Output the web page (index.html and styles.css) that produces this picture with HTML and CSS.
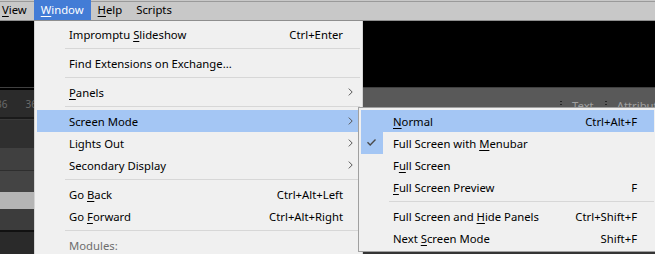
FILE: index.html
```html
<!DOCTYPE html>
<html>
<head>
<meta charset="utf-8">
<link rel="stylesheet" href="styles.css">
</head>
<body>
<div class="screen">
  <div class="menubar">
    <span class="mb-item first"><u>V</u>iew</span>
    <span class="mb-item active"><u>W</u>indow</span>
    <span class="mb-item"><u>H</u>elp</span>
    <span class="mb-item">Scripts</span>
  </div>
  <div class="app">
    <div class="left-col">
      <div class="viewer"></div>
      <div class="ruler"><span class="r1">36</span><span class="r2">36</span></div>
      <div class="band b1"></div>
      <div class="band b2"></div>
      <div class="band b3"></div>
      <div class="band b4"></div>
      <div class="band b5"></div>
      <div class="band b6"></div>
    </div>
    <div class="right-col">
      <div class="viewer"></div>
      <div class="panel-head">
        <span class="grip"></span><span class="tab">Text</span>
        <span class="grip"></span><span class="tab">Attributes</span>
      </div>
      <div class="panel-body"></div>
      <div class="panel-foot"></div>
    </div>
  </div>

  <div class="menu main-menu">
    <div class="item"><span class="icon"></span><span class="label">Impromptu <u>S</u>lideshow</span><span class="key">Ctrl+Enter</span><span class="sub"></span></div>
    <div class="sep"></div>
    <div class="item"><span class="icon"></span><span class="label">Find Extensions on Exchange...</span><span class="key"></span><span class="sub"></span></div>
    <div class="sep"></div>
    <div class="item"><span class="icon"></span><span class="label"><u>P</u>anels</span><span class="key"></span><span class="sub"><svg width="5" height="8" viewBox="0 0 5 8"><path d="M0.8 0.6 L4.2 4 L0.8 7.4" fill="none" stroke="#555" stroke-width="1"/></svg></span></div>
    <div class="sep"></div>
    <div class="item hl"><span class="icon"></span><span class="label">Screen Mode</span><span class="key"></span><span class="sub"><svg width="5" height="8" viewBox="0 0 5 8"><path d="M0.8 0.6 L4.2 4 L0.8 7.4" fill="none" stroke="#555" stroke-width="1"/></svg></span></div>
    <div class="item"><span class="icon"></span><span class="label">Lights Out</span><span class="key"></span><span class="sub"><svg width="5" height="8" viewBox="0 0 5 8"><path d="M0.8 0.6 L4.2 4 L0.8 7.4" fill="none" stroke="#555" stroke-width="1"/></svg></span></div>
    <div class="item"><span class="icon"></span><span class="label">Secondary Display</span><span class="key"></span><span class="sub"><svg width="5" height="8" viewBox="0 0 5 8"><path d="M0.8 0.6 L4.2 4 L0.8 7.4" fill="none" stroke="#555" stroke-width="1"/></svg></span></div>
    <div class="sep"></div>
    <div class="item"><span class="icon"></span><span class="label">Go <u>B</u>ack</span><span class="key">Ctrl+Alt+Left</span><span class="sub"></span></div>
    <div class="item"><span class="icon"></span><span class="label">Go <u>F</u>orward</span><span class="key">Ctrl+Alt+Right</span><span class="sub"></span></div>
    <div class="sep"></div>
    <div class="item disabled"><span class="icon"></span><span class="label">Modules:</span><span class="key"></span><span class="sub"></span></div>
  </div>

  <div class="menu sub-menu">
    <div class="item hl"><span class="icon"></span><span class="label"><u>N</u>ormal</span><span class="key">Ctrl+Alt+F</span><span class="sub"></span></div>
    <div class="item"><span class="icon checked"><svg width="22" height="22" viewBox="0 0 22 22"><path d="M6.5 10.2 L9.2 12.9 L14.5 7.6" fill="none" stroke="#4a4a4a" stroke-width="1.4"/></svg></span><span class="label">Full Screen with <u>M</u>enubar</span><span class="key"></span><span class="sub"></span></div>
    <div class="item"><span class="icon"></span><span class="label">F<u>u</u>ll Screen</span><span class="key"></span><span class="sub"></span></div>
    <div class="item"><span class="icon"></span><span class="label"><u>F</u>ull Screen Preview</span><span class="key">F</span><span class="sub"></span></div>
    <div class="sep"></div>
    <div class="item"><span class="icon"></span><span class="label">Full Screen and <u>H</u>ide Panels</span><span class="key">Ctrl+Shift+F</span><span class="sub"></span></div>
    <div class="item"><span class="icon"></span><span class="label">Next <u>S</u>creen Mode</span><span class="key">Shift+F</span><span class="sub"></span></div>
  </div>
</div>
</body>
</html>
```

FILE: styles.css
```css
html, body {
  margin: 0;
  padding: 0;
  background: #000;
}

.screen {
  position: relative;
  width: 655px;
  height: 254px;
  overflow: hidden;
  background: #000;
  font-family: "Noto Sans", "Liberation Sans", sans-serif;
  font-size: 11.3px;
}

u {
  text-decoration: underline;
  text-underline-offset: 2px;
  text-decoration-thickness: 1px;
}

/* menu bar */
.menubar {
  display: flex;
  height: 20px;
  background: linear-gradient(#c8c8c8 0 1px, #9a9a9a 1px 2px, #c8c8c8 2px);
  border-bottom: 1px solid #8e8e8e;
}

.mb-item {
  padding: 0 7px;
  line-height: 20px;
  color: #000;
  white-space: nowrap;
}

.mb-item.first {
  margin-left: -5px;
}

.mb-item.active {
  background: #437cd6;
  color: #fff;
}

/* app background */
.app {
  display: grid;
  grid-template-columns: 363px 1fr;
  height: 233px;
}

.left-col,
.right-col {
  display: flex;
  flex-direction: column;
  background: #000;
}

.viewer {
  height: 66px;
  background: #000;
  border-bottom: 1px solid #404040;
  flex: none;
}

.ruler {
  margin-top: 2px;
  height: 27px;
  background: #2b2b2b;
  border-bottom: 2px solid #1a1a1a;
  display: flex;
  align-items: center;
  gap: 18px;
  color: #6a6a6a;
  font-size: 10px;
  flex: none;
}

.ruler .r1 {
  margin-left: -4px;
}

.band {
  flex: none;
}

.b1 {
  height: 28px;
  background: #2f2f2f;
  border-top: 1px solid #3a3a3a;
}

.b2 {
  height: 22px;
  background: #404040;
  border-bottom: 1px solid #2e2e2e;
}

.b3 {
  height: 21px;
  background: #444;
}

.b4 {
  height: 17px;
  background: #b5b5b5;
}

.b5 {
  height: 21px;
  background: #3c3c3c;
  border-bottom: 2px solid #111;
}

.b6 {
  flex: 1;
  background: #2a2a2a;
}

.panel-head {
  height: 34px;
  background: #595959;
  display: flex;
  align-items: center;
  padding-left: 197px;
  color: #a0a0a0;
  font-size: 11.3px;
  white-space: nowrap;
  flex: none;
}

.grip {
  width: 2px;
  height: 9px;
  margin-right: 10px;
  margin-top: -2px;
  background: radial-gradient(circle, #262626 0.8px, transparent 1px) 0 0 / 2px 3px repeat-y;
}

.tab {
  margin-right: 11px;
}

.panel-body {
  height: 129px;
  background: #2d2d2d;
  border-bottom: 1px solid #111;
  flex: none;
}

.panel-foot {
  flex: 1;
  background: #353535;
}

/* menus */
.menu {
  position: absolute;
  background: #f0f0f0;
  color: #000;
  white-space: nowrap;
}

.main-menu {
  left: 34px;
  top: 21px;
  width: 323px;
  border: 1px solid #d4d4d4;
  border-top: 0;
  padding: 2px;
}

.sub-menu {
  left: 358px;
  top: 107px;
  width: 293px;
  border: 1px solid #a0a0a0;
  padding: 2px;
}

.item {
  display: grid;
  grid-template-columns: 22px 1fr auto 17px;
  height: 22px;
  align-items: center;
}

.item .icon {
  height: 22px;
  display: block;
}

.item .icon.checked {
  background: #a4c6f4;
}

.item .icon svg {
  display: block;
}

.item .label {
  padding-left: 10px;
}

.item .sub {
  padding-left: 5px;
  display: flex;
  align-items: center;
}

.item .sub svg {
  display: block;
}

.item.hl {
  background: #a4c6f4;
}

.item.disabled {
  color: #6d6d6d;
}

.sep {
  height: 1px;
  background: #d7d7d7;
  margin: 3px 0 3px 28px;
}
```
